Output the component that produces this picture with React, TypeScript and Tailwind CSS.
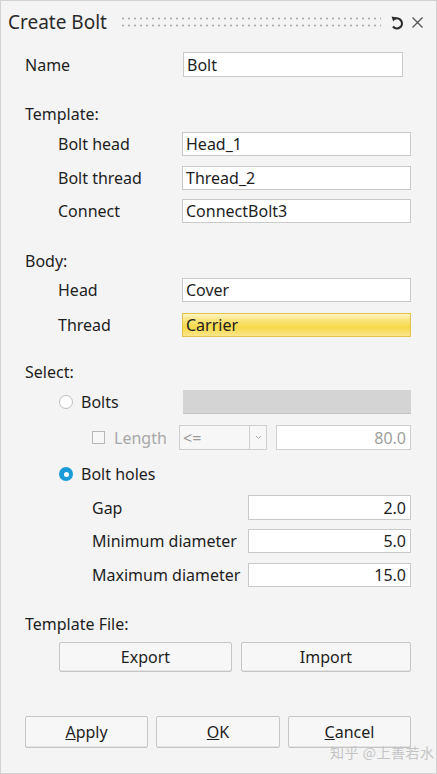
import React from 'react'

const font = { fontFamily: '"Noto Sans", "Liberation Sans", sans-serif' }

function Field({ value, className = '', right = false, muted = false }: { value: string; className?: string; right?: boolean; muted?: boolean }) {
  return (
    <div
      className={`h-full bg-white border border-[#c9c9c9] flex items-center px-[3px] text-[16px] leading-none ${
        right ? 'justify-end pr-[4px]' : ''
      } ${muted ? 'text-[#a0a0a0]' : 'text-[#1e1e1e]'} ${className}`}
    >
      {value}
    </div>
  )
}

function Btn({ children, className = '' }: { children: React.ReactNode; className?: string }) {
  return (
    <div
      className={`h-full bg-[#f7f7f7] border border-[#c6c6c6] rounded-[2px] flex items-center justify-center text-[16px] text-[#1e1e1e] shadow-[inset_0_-1px_0_#e4e4e4] ${className}`}
    >
      {children}
    </div>
  )
}

export default function App() {
  return (
    <div className="w-[437px] h-[774px] bg-[#f4f4f4] border border-[#d2d2d2] relative text-[#1e1e1e]" style={font}>
      {/* title bar */}
      <div className="h-[43px] flex items-center pl-[7px] pr-[11px]">
        <span className="text-[19px] text-[#2a2a2a] leading-none">Create Bolt</span>
        <svg className="ml-[14px] mt-[1px]" width="260" height="14">
          <defs>
            <pattern id="dots" width="6" height="7" patternUnits="userSpaceOnUse">
              <circle cx="2" cy="2.5" r="0.9" fill="#9a9a9a" />
            </pattern>
          </defs>
          <rect width="260" height="14" fill="url(#dots)" />
        </svg>
        <svg className="ml-[8px]" width="16" height="16" viewBox="0 0 16 16">
          <path d="M5.2 4.2 A5 5 0 1 1 4 11.5" fill="none" stroke="#2b2b2b" strokeWidth="2.2" />
          <path d="M2.6 1.6 L7.6 2.6 L4.2 6.6 Z" fill="#2b2b2b" />
        </svg>
        <svg className="ml-[6px]" width="13" height="13" viewBox="0 0 13 13">
          <path d="M1.5 1.5 L11.5 11.5 M11.5 1.5 L1.5 11.5" stroke="#555" strokeWidth="1.3" />
        </svg>
      </div>

      <div className="pl-[24px] pr-[25px]">
        {/* Name */}
        <div className="mt-[8px] h-[25px] flex items-center">
          <span className="w-[158px] text-[16px]">Name</span>
          <Field value="Bolt" className="w-[220px]" />
        </div>

        {/* Template */}
        <div className="mt-[27px] h-[20px] flex items-center text-[16px]">Template:</div>
        <div className="mt-[8px] h-[24px] flex items-center pl-[33px]">
          <span className="w-[124px] text-[16px]">Bolt head</span>
          <Field value="Head_1" className="flex-1" />
        </div>
        <div className="mt-[10px] h-[24px] flex items-center pl-[33px]">
          <span className="w-[124px] text-[16px]">Bolt thread</span>
          <Field value="Thread_2" className="flex-1" />
        </div>
        <div className="mt-[9px] h-[24px] flex items-center pl-[33px]">
          <span className="w-[124px] text-[16px]">Connect</span>
          <Field value="ConnectBolt3" className="flex-1" />
        </div>

        {/* Body */}
        <div className="mt-[28px] h-[20px] flex items-center text-[16px]">Body:</div>
        <div className="mt-[7px] h-[24px] flex items-center pl-[33px]">
          <span className="w-[124px] text-[16px]">Head</span>
          <Field value="Cover" className="flex-1" />
        </div>
        <div className="mt-[11px] h-[24px] flex items-center pl-[33px]">
          <span className="w-[124px] text-[16px]">Thread</span>
          <div className="flex-1 h-full border border-[#e2c24a] bg-[linear-gradient(to_bottom,#fff6c4_0%,#fbe47a_30%,#f6d948_60%,#fbe68c_100%)] flex items-center px-[3px] text-[16px] leading-none text-[#1e1e1e]">
            Carrier
          </div>
        </div>

        {/* Select */}
        <div className="mt-[25px] h-[20px] flex items-center text-[16px]">Select:</div>
        <div className="mt-[8px] h-[24px] flex items-center pl-[34px]">
          <span className="w-[14px] h-[14px] rounded-full border border-[#bdbdbd] bg-white" />
          <span className="ml-[8px] w-[102px] text-[16px]">Bolts</span>
          <div className="flex-1 h-full bg-[#d4d4d4] border-b border-[#c2c2c2]" />
        </div>
        <div className="mt-[11px] h-[25px] flex items-center pl-[67px]">
          <span className="w-[13px] h-[13px] border border-[#b8b8b8] bg-[#f7f7f7]" />
          <span className="ml-[9px] w-[65px] text-[16px] text-[#a8a8a8]">Length</span>
          <div className="w-[88px] h-full flex border border-[#cfcfcf] bg-[#f7f7f7]">
            <div className="flex-1 flex items-center px-[3px] text-[16px] text-[#9a9a9a] leading-none">&lt;=</div>
            <div className="w-[17px] border-l border-[#cfcfcf] flex items-center justify-center">
              <svg width="7" height="5" viewBox="0 0 7 5">
                <path d="M1 1 L3.5 3.5 L6 1" fill="none" stroke="#aaa" strokeWidth="1" />
              </svg>
            </div>
          </div>
          <div className="ml-[9px] flex-1 h-full">
            <Field value="80.0" right muted className="bg-[#f7f7f7] border-[#d0d0d0]" />
          </div>
        </div>
        <div className="mt-[14px] h-[20px] flex items-center pl-[34px]">
          <span className="w-[14px] h-[14px] rounded-full bg-[#1a9bd7] flex items-center justify-center">
            <span className="w-[5px] h-[5px] rounded-full bg-white" />
          </span>
          <span className="ml-[8px] text-[16px]">Bolt holes</span>
        </div>
        <div className="mt-[11px] h-[25px] flex items-center pl-[67px]">
          <span className="w-[156px] text-[16px]">Gap</span>
          <Field value="2.0" right className="flex-1" />
        </div>
        <div className="mt-[9px] h-[24px] flex items-center pl-[67px]">
          <span className="w-[156px] text-[16px]">Minimum diameter</span>
          <Field value="5.0" right className="flex-1" />
        </div>
        <div className="mt-[10px] h-[24px] flex items-center pl-[67px]">
          <span className="w-[156px] text-[16px]">Maximum diameter</span>
          <Field value="15.0" right className="flex-1" />
        </div>

        {/* Template File */}
        <div className="mt-[27px] h-[20px] flex items-center text-[16px]">Template File:</div>
        <div className="mt-[8px] h-[30px] flex pl-[34px] gap-[9px]">
          <Btn className="w-[173px]">Export</Btn>
          <Btn className="flex-1">Import</Btn>
        </div>

        {/* Footer */}
        <div className="mt-[44px] h-[32px] flex gap-[8px]">
          <Btn className="w-[123px]">
            <span><u>A</u>pply</span>
          </Btn>
          <Btn className="w-[124px]">
            <span><u>O</u>K</span>
          </Btn>
          <Btn className="flex-1">
            <span><u>C</u>ancel</span>
          </Btn>
        </div>
      </div>

      <div
        className="absolute left-[329px] top-[744px] text-[14px] text-[#c4c4c4] leading-none tracking-[0.5px]"
        style={{ fontFamily: '"Noto Sans CJK SC", "Noto Sans", sans-serif' }}
      >
        知乎 @上善若水
      </div>
    </div>
  )
}
